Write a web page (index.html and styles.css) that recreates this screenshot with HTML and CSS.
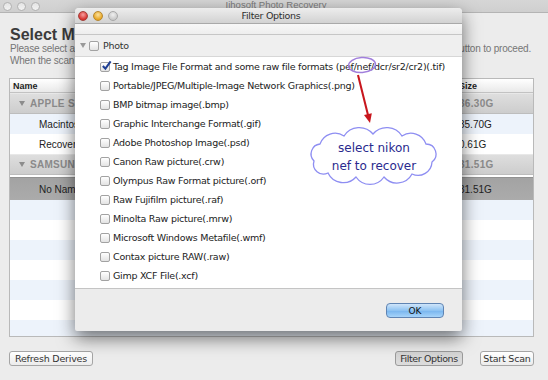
FILE: index.html
```html
<!DOCTYPE html>
<html lang="en">
<head>
    <meta charset="UTF-8">
    <title>Iihosoft Photo Recovery</title>
    <link rel="stylesheet" href="styles.css">
</head>
<body>
    <div class="app">
        <div class="app-bar">
            <div class="lights lights-off"><span></span><span></span><span></span></div>
            <div class="app-title">Iihosoft Photo Recovery</div>
        </div>

        <div class="app-body">
            <h1>Select Media</h1>
            <p class="hint"><span>Please select a drive</span><span>button to proceed.</span></p>
            <p class="hint">When the scan ends</p>

            <div class="drives">
                <div class="drives-head"><span class="col-name">Name</span><span class="col-size">Size</span></div>
                <div class="drive-row group"><span class="col-name"><i class="tri"></i>APPLE SSD</span><span class="col-size">36.30G</span></div>
                <div class="drive-row stripe"><span class="col-name sub">Macintosh</span><span class="col-size">35.70G</span></div>
                <div class="drive-row"><span class="col-name sub">Recovery</span><span class="col-size">0.61G</span></div>
                <div class="drive-row group"><span class="col-name"><i class="tri"></i>SAMSUNG</span><span class="col-size">31.51G</span></div>
                <div class="drive-row selected"><span class="col-name sub">No Name</span><span class="col-size">31.51G</span></div>
                <div class="drive-row stripe"></div>
                <div class="drive-row"></div>
                <div class="drive-row stripe"></div>
                <div class="drive-row"></div>
                <div class="drive-row stripe"></div>
                <div class="drive-row"></div>
                <div class="drive-row stripe"></div>
            </div>

            <div class="actions">
                <button class="btn btn-refresh">Refresh Derives</button>
                <span class="spacer"></span>
                <button class="btn btn-filter btn-pressed">Filter Options</button>
                <button class="btn btn-start">Start Scan</button>
            </div>
        </div>
    </div>

    <!-- sheet dialog over the main window -->
    <div class="sheet">
        <div class="sheet-bar">
            <div class="lights"><span class="red"></span><span class="yellow"></span><span class="grey"></span></div>
            <div class="sheet-title">Filter Options</div>
        </div>
        <div class="sheet-tools"></div>
        <div class="filter-group"><i class="tri"></i><span class="check"></span>Photo</div>
        <ul class="filter-list">
            <li><span class="check checked"><svg viewBox="0 0 12 12"><path d="M2 6.5 L4.8 9.5 L10.5 1.5" /></svg></span>Tag Image File Format and some raw file formats (pef/nef/dcr/sr2/cr2)(.tif)</li>
            <li><span class="check"></span>Portable/JPEG/Multiple-Image Network Graphics(.png)</li>
            <li><span class="check"></span>BMP bitmap image(.bmp)</li>
            <li><span class="check"></span>Graphic Interchange Format(.gif)</li>
            <li><span class="check"></span>Adobe Photoshop Image(.psd)</li>
            <li><span class="check"></span>Canon Raw picture(.crw)</li>
            <li><span class="check"></span>Olympus Raw Format picture(.orf)</li>
            <li><span class="check"></span>Raw Fujifilm picture(.raf)</li>
            <li><span class="check"></span>Minolta Raw picture(.mrw)</li>
            <li><span class="check"></span>Microsoft Windows Metafile(.wmf)</li>
            <li><span class="check"></span>Contax picture RAW(.raw)</li>
            <li><span class="check"></span>Gimp XCF File(.xcf)</li>
        </ul>
        <div class="sheet-foot">
            <button class="btn-ok">OK</button>
        </div>
    </div>

    <!-- hand drawn notes -->
    <svg class="markup" width="548" height="380" viewBox="0 0 548 380">
        <ellipse cx="362" cy="65" rx="13.5" ry="7.5" transform="rotate(-4 362 65)" class="ring" />
        <line x1="358" y1="75" x2="368" y2="115" class="arrow" />
        <polygon points="370,123 371.8,113.3 364,115.1" class="arrow-head" />
    </svg>

    <div class="cloud">
        <svg width="136" height="60" viewBox="0 0 136 60">
            <path d="M8 34 A10 10 0 0 1 14 17 A16 16 0 0 1 38 9 A18 18 0 0 1 67 7 A18 18 0 0 1 96 9 A16 16 0 0 1 120 17 A10 10 0 0 1 126 35 A14 14 0 0 1 106 47 A17 17 0 0 1 78 50 A17 17 0 0 1 50 50 A17 17 0 0 1 22 46 A10 10 0 0 1 8 34 Z" />
        </svg>
        <p>select nikon<br>nef to recover</p>
    </div>
</body>
</html>
```

FILE: styles.css
```css
body {
    margin: 0;
    width: 548px;
    height: 380px;
    overflow: hidden;
    position: relative;
    background-color: #ececec;
    font-family: "DejaVu Sans", sans-serif;
    color: #222;
}

/* Main window */
.app-bar {
    height: 12px;
    display: flex;
    align-items: center;
    padding-right: 36px;
    background: linear-gradient(#d6d6d6, #cfcfcf);
    border-bottom: 1px solid #b4b4b4;
    overflow: hidden;
}

.lights {
    display: flex;
    gap: 5px;
    padding-left: 3px;
}

.lights span {
    width: 9px;
    height: 9px;
    border-radius: 50%;
    box-sizing: border-box;
}

.lights-off span {
    border: 1px solid #b2b2b2;
    background: linear-gradient(#e4e4e4, #f2f2f2);
}

.app-title {
    flex: 1;
    align-self: flex-start;
    text-align: center;
    font-family: "Liberation Sans", sans-serif;
    font-size: 9.5px;
    line-height: 9px;
    color: #7a7a7a;
}

.app-body {
    padding: 0 14px 0 9px;
    font-family: "Liberation Sans", sans-serif;
}

h1 {
    margin: 13px 0 0 1px;
    font-size: 16px;
    line-height: 17px;
    color: #3b3b3b;
}

.hint {
    margin: 0;
    padding: 0 3px 0 1px;
    display: flex;
    justify-content: space-between;
    font-size: 10px;
    line-height: 12px;
    letter-spacing: -0.2px;
    color: #767676;
}

.drives {
    margin-top: 11px;
    height: 259px;
    box-sizing: border-box;
    border: 1px solid #b9b9b9;
    background: #fff;
    overflow: hidden;
}

.drives-head,
.drive-row {
    display: flex;
    align-items: center;
}

.drives-head {
    height: 13px;
    background: linear-gradient(#ffffff, #e9e9e9);
    border-bottom: 1px solid #c2c2c2;
    font-size: 9px;
    font-weight: bold;
    color: #1e1e1e;
}

.col-name {
    flex: 1;
    padding-left: 3px;
}

.col-size {
    width: 74px;
}

.drive-row {
    height: 20px;
    font-size: 10px;
}

.drive-row.group {
    height: 21px;
    background: linear-gradient(#dedede, #cdcdcd);
    border-top: 1px solid #e8e8e8;
    border-bottom: 1px solid #bdbdbd;
    box-sizing: border-box;
    color: #8a8a8a;
    font-weight: bold;
    letter-spacing: 0.3px;
}

.drive-row.group .col-name {
    padding-left: 9px;
}

.drive-row.group .tri {
    margin-right: 5px;
}

.tri {
    display: inline-block;
    width: 0;
    height: 0;
    border-left: 3px solid transparent;
    border-right: 3px solid transparent;
    border-top: 5px solid #8c8c8c;
    vertical-align: 1px;
}

.col-name.sub {
    padding-left: 29px;
}

.drive-row.stripe {
    background-color: #edf3fb;
}

.drive-row.selected {
    height: 22px;
    background: linear-gradient(#a3a3a3, #ababab);
    border-top: 1px solid #929292;
    margin-top: 2px;
}

.actions {
    display: flex;
    gap: 17px;
    margin-top: 14px;
}

.spacer {
    flex: 1;
}

.btn {
    height: 15px;
    padding: 0;
    font-family: "DejaVu Sans", sans-serif;
    font-size: 9.5px;
    letter-spacing: -0.2px;
    line-height: 13px;
    color: #333;
    border: 1px solid #a5a5a5;
    border-radius: 3px;
    background: linear-gradient(#ffffff, #ececec);
}

.btn-refresh {
    width: 84px;
}

.btn-filter {
    width: 68px;
    letter-spacing: -0.4px;
}

.btn-start {
    width: 54px;
}

.btn-pressed {
    background: linear-gradient(#d4d4d4, #dcdcdc);
    border-color: #9a9a9a;
}

/* Filter options sheet */
.sheet {
    position: absolute;
    left: 75px;
    top: 8px;
    width: 387px;
    height: 323px;
    display: flex;
    flex-direction: column;
    background-color: #ececec;
    border-radius: 4px 4px 2px 2px;
    box-shadow: 0 7px 18px rgba(0, 0, 0, 0.55);
    overflow: hidden;
}

.sheet-bar {
    height: 16px;
    flex: none;
    display: flex;
    align-items: center;
    padding-right: 38px;
    background: linear-gradient(#ededed, #d2d2d2);
    border-bottom: 1px solid #a9a9a9;
    box-sizing: border-box;
}

.sheet-bar .lights span {
    width: 10px;
    height: 10px;
}

.red {
    background: radial-gradient(circle at 50% 35%, #f7a0a0, #d6312d 70%);
    border: 1px solid #a3403b;
}

.yellow {
    background: radial-gradient(circle at 50% 35%, #fbe2a0, #e7a522 70%);
    border: 1px solid #b58730;
}

.grey {
    background: radial-gradient(circle at 50% 35%, #f0f0f0, #c9c9c9 70%);
    border: 1px solid #a8a8a8;
}

.sheet-title {
    flex: 1;
    text-align: center;
    font-size: 9.5px;
    letter-spacing: -0.3px;
    color: #2e2e2e;
}

.sheet-tools {
    height: 10px;
    flex: none;
    background: linear-gradient(#f7f7f7, #eeeeee);
    border-bottom: 1px solid #c6c6c6;
}

.filter-group {
    height: 21px;
    flex: none;
    display: flex;
    align-items: center;
    padding-left: 5px;
    background-color: #efefef;
    border-bottom: 1px solid #d7d7d7;
    font-size: 9.5px;
    letter-spacing: -0.25px;
    color: #333;
}

.filter-group .tri {
    margin-right: 3px;
    border-top-color: #999;
}

.filter-group .check {
    margin-right: 4px;
}

.check {
    width: 10px;
    height: 10px;
    flex: none;
    box-sizing: border-box;
    border: 1px solid #a2a2a2;
    border-radius: 2px;
    background: linear-gradient(#ffffff, #e3e3e3);
    position: relative;
}

.check svg {
    position: absolute;
    left: 0;
    top: -3px;
    width: 11px;
    height: 11px;
    fill: none;
    stroke: #1f3f94;
    stroke-width: 2.2;
}

.filter-list {
    list-style: none;
    margin: 0;
    padding: 0 0 3px;
    flex: none;
    background-color: #fff;
}

.filter-list li {
    height: 19px;
    display: flex;
    align-items: center;
    padding-left: 25px;
    font-size: 9.5px;
    letter-spacing: -0.25px;
    color: #222;
    white-space: nowrap;
}

.filter-list .check {
    margin-right: 3px;
}

.sheet-foot {
    flex: 1;
    display: flex;
    justify-content: flex-end;
    align-items: flex-start;
    padding: 14px 18px 0 0;
    border-top: 1px solid #c4c4c4;
}

.btn-ok {
    width: 58px;
    height: 15px;
    padding: 0;
    font-family: "DejaVu Sans", sans-serif;
    font-size: 9px;
    color: #111;
    border: 1px solid #5f84b3;
    border-radius: 4px;
    background: linear-gradient(#cfe5fa, #8ec3f2 50%, #77b4ee 51%, #a6d4fa);
}

/* Notes drawn on top */
.markup {
    position: absolute;
    left: 0;
    top: 0;
    pointer-events: none;
}

.ring {
    fill: none;
    stroke: #a17fdc;
    stroke-width: 1.5;
}

.arrow {
    stroke: #c8161d;
    stroke-width: 2;
}

.arrow-head {
    fill: #c8161d;
}

.cloud {
    position: absolute;
    left: 306px;
    top: 127px;
    width: 136px;
    height: 60px;
}

.cloud svg {
    position: absolute;
    left: 0;
    top: 0;
    overflow: visible;
}

.cloud path {
    fill: #fff;
    stroke: #8e8ef2;
    stroke-width: 1.3;
}

.cloud p {
    position: relative;
    margin: 0;
    height: 100%;
    display: flex;
    align-items: center;
    justify-content: center;
    text-align: center;
    font-size: 12px;
    line-height: 18px;
    color: #2a2a8e;
}
```
